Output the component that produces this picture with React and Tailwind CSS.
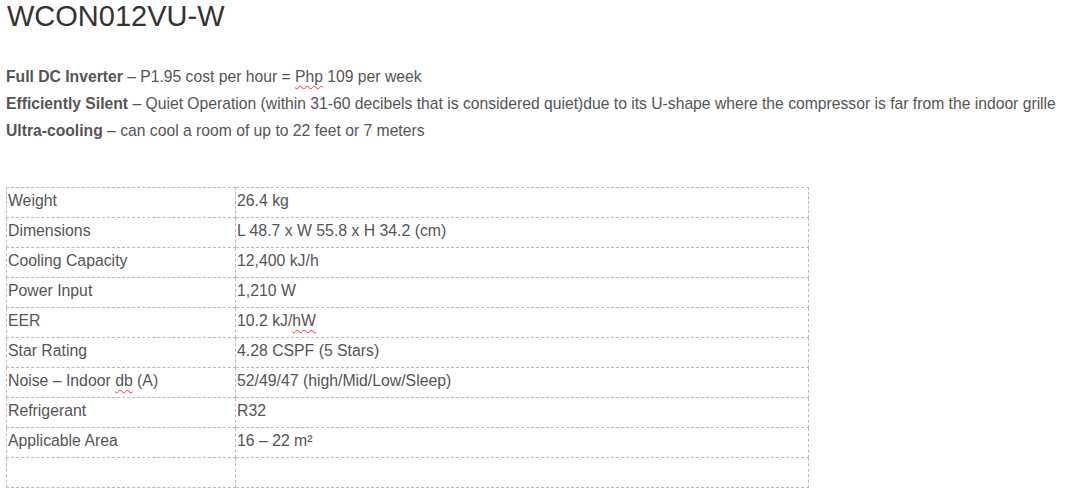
import React from 'react';

function Typo({ children }) {
  return (
    <span className="underline decoration-wavy decoration-red-500 decoration-1 underline-offset-[3px]">
      {children}
    </span>
  );
}

const specs = [
  ['Weight', '26.4 kg'],
  ['Dimensions', 'L 48.7 x W 55.8 x H 34.2 (cm)'],
  ['Cooling Capacity', '12,400 kJ/h'],
  ['Power Input', '1,210 W'],
  ['EER', <>10.2 kJ/<Typo>hW</Typo></>],
  ['Star Rating', '4.28 CSPF (5 Stars)'],
  [<>Noise – Indoor <Typo>db</Typo> (A)</>, '52/49/47 (high/Mid/Low/Sleep)'],
  ['Refrigerant', 'R32'],
  ['Applicable Area', '16 – 22 m²'],
  ['', ''],
];

function App() {
  return (
    <div className="min-h-screen bg-white text-[#555] font-['Liberation_Sans',Arial,sans-serif] px-[6px] overflow-hidden">
      <h1 className="text-[29px] leading-[32px] font-normal text-[#333] pl-[1px]">WCON012VU-W</h1>

      <p className="mt-[31px] text-[15.7px] leading-[27px] whitespace-nowrap">
        <b className="font-bold">Full DC Inverter</b> – P1.95 cost per hour = <Typo>Php</Typo> 109 per week
        <br />
        <b className="font-bold">Efficiently Silent</b> – Quiet Operation (within 31-60 decibels that is considered quiet)due to its U-shape where the compressor is far from the indoor grille
        <br />
        <b className="font-bold">Ultra-cooling</b> – can cool a room of up to 22 feet or 7 meters
      </p>

      <table className="mt-[43px] border-collapse w-[803px] text-[15.8px] leading-[17px]">
        <tbody>
          {specs.map(([label, value], i) => (
            <tr key={i} className="h-[30px]">
              <td className="w-[229px] border border-dashed border-[#bbb] px-[1px] pb-[4px] align-middle">
                {label}
              </td>
              <td className="border border-dashed border-[#bbb] px-[1px] pb-[4px] align-middle">
                {value}
              </td>
            </tr>
          ))}
        </tbody>
      </table>
    </div>
  );
}

export default App;
